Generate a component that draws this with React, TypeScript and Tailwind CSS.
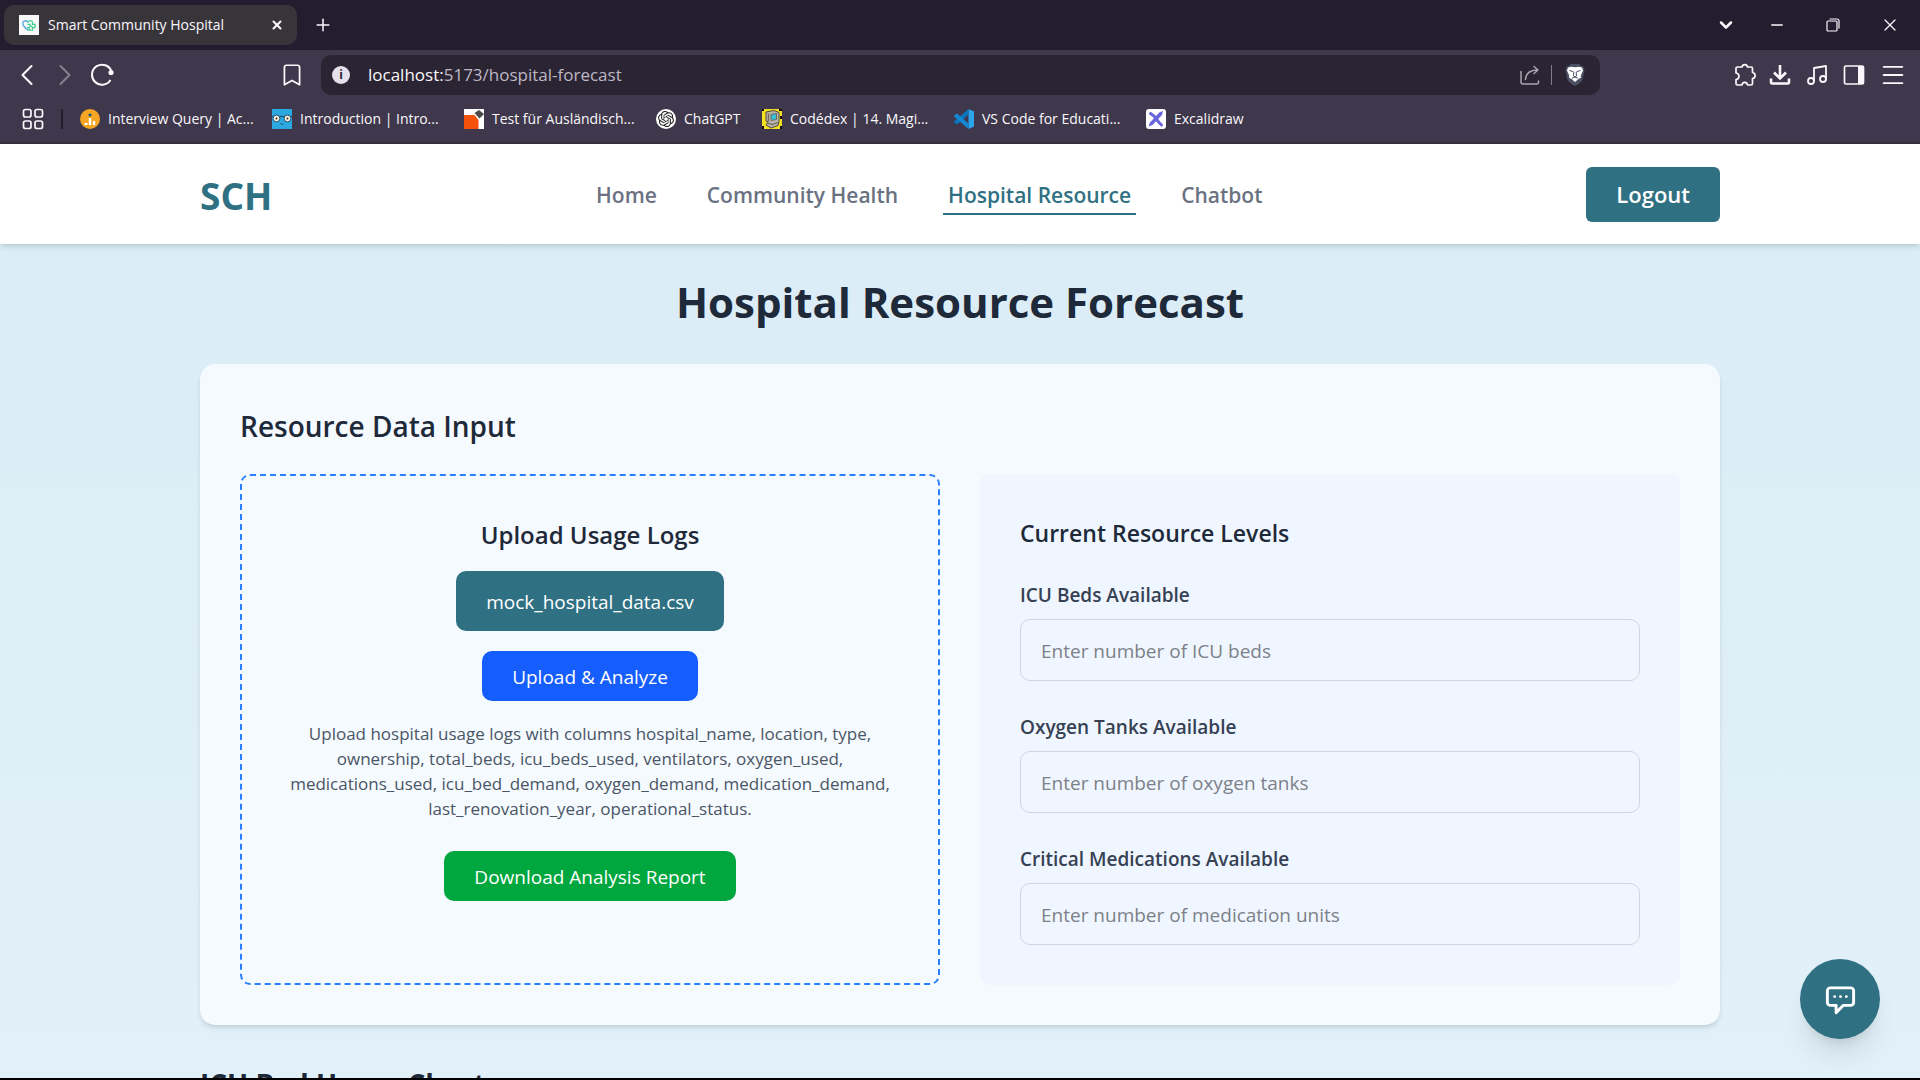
import React from 'react';
import {
  Bookmark,
  ChevronDown,
  ChevronLeft,
  ChevronRight,
  Menu,
  Minus,
  Music,
  Plus,
  X,
} from 'lucide-react';
import { SiOpenai } from 'react-icons/si';

const SchFavicon = () => (
  <svg viewBox="0 0 20 20" className="size-5 shrink-0">
    <rect width="20" height="20" fill="#f8f8f8" />
    <path d="M9.5 15.5C6 13 3.8 10.800 3.800 8.300 3.800 5.500 7.500 4.800 9 7.300" fill="none" stroke="#4aa3d8" strokeWidth="1.300" />
    <path d="M9 7.300C10 5 13.500 5 13.500 7.500v1.800h2.500v3.400h-2.500v2.500h-3.300v-2.500H8M8.500 9.300h2.500v2h2.500" fill="none" stroke="#3fcf8e" strokeWidth="1.300" />
  </svg>
);

const InterviewIcon = () => (
  <svg viewBox="0 0 20 20" className="size-5 shrink-0">
    <circle cx="10" cy="10" r="10" fill="#f6a623" />
    <circle cx="10" cy="6" r="1.600" fill="#22577a" />
    <path d="M10 9v7M14 12v4" stroke="#fff" strokeWidth="2.400" />
    <path d="M4.500 15h3" stroke="#fff" strokeWidth="2" />
  </svg>
);

const IntroIcon = () => (
  <svg viewBox="0 0 20 20" className="size-5 shrink-0">
    <rect width="20" height="20" fill="#2ba8e0" />
    <path d="M0 7.500h20" stroke="#1b4f72" strokeWidth="1.200" />
    <circle cx="4.500" cy="9.500" r="3.400" fill="#fdf3dc" stroke="#1b4f72" />
    <circle cx="15.500" cy="9.500" r="3.400" fill="#fdf3dc" stroke="#1b4f72" />
    <circle cx="4.500" cy="9.500" r="1" fill="#222" />
    <circle cx="15.500" cy="9.500" r="1" fill="#222" />
    <path d="M8.500 14.500l1.500 1 1.500-1" fill="none" stroke="#1b4f72" />
  </svg>
);

const TestIcon = () => (
  <svg viewBox="0 0 20 20" className="size-5 shrink-0">
    <rect width="20" height="20" fill="#fff" />
    <path d="M0 6h10.500l4 5V20H0z" fill="#f4510b" />
    <path d="M10.500 4l4.500-3 5 4-4.500 4.500z" fill="#4a4a4a" />
  </svg>
);

const ChatGptIcon = () => (
  <span className="flex size-5 shrink-0 items-center justify-center rounded-full bg-white">
    <SiOpenai className="size-4 text-[#222222]" />
  </span>
);

const CodedexIcon = () => (
  <svg viewBox="0 0 20 20" className="size-5 shrink-0">
    <rect width="20" height="20" fill="#f3e01e" />
    <path d="M0 0h2v2H0zM17 0h3v2h-3zM0 17h2v3H0zM18 17h2v3h-2zM18 7h2v3h-2z" fill="#171300" />
    <path d="M4 3l8-1.500 5 2v9l-1 4-7 2.500-5-3 2-3-2-1z" fill="#b9b3a8" stroke="#4d4940" strokeWidth="1" />
    <path d="M9 5.500l5.500-1v6L9 11.500z" fill="#35c3da" stroke="#6e695e" strokeWidth="1" />
    <path d="M6 14l4 1.500 6-2M6.500 4.500v8" fill="none" stroke="#6e695e" strokeWidth="1.200" />
  </svg>
);

const VsCodeIcon = () => (
  <svg viewBox="0 0 20 20" className="size-5 shrink-0">
    <path d="M14.500 0L20 2.500v15L14.500 20z" fill="#2aa5ee" />
    <path d="M14.500 0v5.500L3 15.500 0 13.500v-1z" fill="#0a74bd" />
    <path d="M14.500 20v-5.500L3 4.500 0 6.500v1z" fill="#1588d3" />
  </svg>
);

const ExcalidrawIcon = () => (
  <svg viewBox="0 0 20 20" className="size-5 shrink-0">
    <rect width="20" height="20" rx="3" fill="#fff" />
    <path d="M4.500 4.500l3.500 2.500 5 6.500 2.500 2.500" fill="none" stroke="#6965db" strokeWidth="3" strokeLinecap="round" />
    <path d="M17 2l-3.500 1.300L4 13.500l-1.500 4L6.500 16 16 6z" fill="#6965db" />
  </svg>
);

const ReloadIcon = () => (
  <svg viewBox="0 0 24 24" className="size-6" fill="none" stroke="currentColor" strokeWidth="2">
    <path d="M19.500 17A10 10 0 1 1 20.500 8.500" />
    <circle cx="20" cy="9.500" r="2.600" fill="currentColor" stroke="none" />
  </svg>
);

const AppsIcon = () => (
  <svg viewBox="0 0 22 22" className="size-[22px]" fill="none" stroke="currentColor" strokeWidth="1.700">
    <rect x="1.500" y="1.500" width="7.500" height="7.500" rx="2" />
    <rect x="13" y="1.500" width="7.500" height="7.500" rx="2" />
    <rect x="1.500" y="13" width="7.500" height="7.500" rx="2" />
    <rect x="13" y="13" width="7.500" height="7.500" rx="2" />
  </svg>
);

const ShareIcon = () => (
  <svg viewBox="0 0 20 20" className="size-5" fill="none" stroke="currentColor" strokeWidth="1.500" strokeLinecap="round" strokeLinejoin="round">
    <path d="M1 6.500V17a2 2 0 0 0 2 2h13.500a2 2 0 0 0 2-2v-1" />
    <path d="M5.500 14.500C6 8.500 9.500 5 17.500 5M14 1.500L18 5l-4 3.500" />
  </svg>
);

const BraveIcon = () => (
  <svg viewBox="0 0 20 24" className="h-6 w-5">
    <path d="M5.500 1h9L16 3l2.500.500 1 4-1.800 8.500c-.500 2-2.200 4-7.700 7-5.500-3-7.200-5-7.700-7L.500 7.500l1-4L4 3z" fill="#4b5063" />
    <path d="M3 4.500l3-.700 4 .500 4-.500 3 .700 1 3-2.300 5.300.300 2-2.500 1.200L10 19l-3.500-3-2.500-1.200.300-2L2 7.500z" fill="#fff" />
    <path d="M4.500 7.500l4 1.200M15.500 7.500l-4 1.200M8.800 9L8.500 13l1.500 1 1.500-1-.300-4M7 15.300l3-1.300 3 1.300" fill="none" stroke="#4b5063" strokeWidth="1" />
  </svg>
);

const PuzzleIcon = () => (
  <svg viewBox="0 0 24 24" className="size-6" fill="none" stroke="currentColor" strokeWidth="1.700" strokeLinejoin="round">
    <path d="M3 5.500A1.500 1.500 0 0 1 4.500 4H9c.500-3.200 5-3.200 5.500 0h3.500A1.500 1.500 0 0 1 19.500 5.500V9.500c3.500.500 3.500 5.500 0 6v5a1.500 1.500 0 0 1-1.500 1.500H14.500c-.500-3.500-5-3.500-5.500 0H4.500A1.500 1.500 0 0 1 3 20.500V16.500c4-.500 4-6 0-6.500z" />
  </svg>
);

const DownloadIcon = () => (
  <svg viewBox="0 0 22 22" className="size-[22px]" fill="none" stroke="currentColor" strokeWidth="2.600">
    <path d="M11 1v13M5 8.500l6 6 6-6" />
    <path d="M2 14.500V18a1.500 1.500 0 0 0 1.500 1.500h15A1.500 1.500 0 0 0 20 18v-3.500" />
  </svg>
);

const SidebarIcon = () => (
  <svg viewBox="0 0 22 22" className="size-[22px]">
    <rect x="1.500" y="2" width="19" height="18" rx="1.500" fill="none" stroke="currentColor" strokeWidth="1.700" />
    <path d="M15 2h6v18h-6z" fill="currentColor" />
  </svg>
);

const RestoreIcon = () => (
  <svg viewBox="0 0 14 14" className="size-[14px]" fill="none" stroke="currentColor" strokeWidth="1.200">
    <rect x="1" y="3" width="10" height="10" rx="1" />
    <path d="M3.500 1H11a2 2 0 0 1 2 2v7.500" />
  </svg>
);

const ChatIcon = () => (
  <svg viewBox="0 0 24 24" className="size-[35px]" fill="none" stroke="currentColor" strokeWidth="2" strokeLinecap="round" strokeLinejoin="round">
    <path d="M8 10h.01M12 10h.01M16 10h.01M9 16H5a2 2 0 01-2-2V6a2 2 0 012-2h14a2 2 0 012 2v8a2 2 0 01-2 2h-5l-5 5v-5z" />
  </svg>
);

const bookmarks = [
  { title: 'Interview Query | Ac...', icon: <InterviewIcon />, long: true },
  { title: 'Introduction | Intro...', icon: <IntroIcon />, long: true },
  { title: 'Test für Ausländisch...', icon: <TestIcon />, long: true },
  { title: 'ChatGPT', icon: <ChatGptIcon />, long: false },
  { title: 'Codédex | 14. Magi...', icon: <CodedexIcon />, long: true },
  { title: 'VS Code for Educati...', icon: <VsCodeIcon />, long: true },
  { title: 'Excalidraw', icon: <ExcalidrawIcon />, long: false },
];

const navLinks = ['Home', 'Community Health', 'Hospital Resource', 'Chatbot'];

const fields = [
  { id: 'icu', label: 'ICU Beds Available', placeholder: 'Enter number of ICU beds' },
  { id: 'oxygen', label: 'Oxygen Tanks Available', placeholder: 'Enter number of oxygen tanks' },
  { id: 'medication', label: 'Critical Medications Available', placeholder: 'Enter number of medication units' },
];

const BrowserChrome: React.FC = () => (
  <div className="shrink-0 border-b-2 border-[#322d3a] bg-[#3f374b] text-[#faf8fc]">
    {/* Title bar */}
    <div className="flex h-[50px] items-center bg-[#241d2f] pl-1">
      <div className="flex h-10 w-[293px] items-center rounded-[10px] bg-[#38353a] pr-[13px] pl-[15px]">
        <SchFavicon />
        <span className="ml-[9px] flex-1 whitespace-nowrap text-sm">Smart Community Hospital</span>
        <button aria-label="Close tab"><X className="size-[14px]" strokeWidth={3.5} /></button>
      </div>
      <button aria-label="New tab" className="ml-4"><Plus className="size-5" strokeWidth={1.8} /></button>
      <div className="ml-auto flex items-center gap-9 pr-5">
        <button aria-label="Search tabs"><ChevronDown className="size-5" strokeWidth={3} /></button>
        <button aria-label="Minimize" className="-ml-1"><Minus className="size-[18px]" strokeWidth={1.8} /></button>
        <button aria-label="Restore" className="ml-1"><RestoreIcon /></button>
        <button aria-label="Close" className="ml-1"><X className="size-5" strokeWidth={1.5} /></button>
      </div>
    </div>

    {/* Address bar */}
    <div className="flex h-[50px] items-center pr-[13px] pl-[9px]">
      <button aria-label="Back"><ChevronLeft className="size-9" strokeWidth={1.4} /></button>
      <button aria-label="Forward" className="ml-0.5 text-[#85808f]"><ChevronRight className="size-9" strokeWidth={1.4} /></button>
      <button aria-label="Reload" className="ml-2"><ReloadIcon /></button>
      <button aria-label="Bookmark this page" className="ml-[164px]"><Bookmark className="size-[26px]" strokeWidth={1.6} /></button>
      <div className="mr-[133px] ml-4 flex h-10 flex-1 items-center rounded-[10px] bg-[#2b2433] pr-[15px] pl-[11px]">
        <span className="flex size-[18px] items-center justify-center rounded-full bg-[#e6e0ec] text-xs font-bold text-[#2b2433]">i</span>
        <p className="ml-[18px] flex-1 text-[17px] text-[#bdb8c4]">
          <span className="text-[#faf8fc]">localhost:</span>5173/hospital-forecast
        </p>
        <button aria-label="Share" className="text-[#a9a4b0]"><ShareIcon /></button>
        <span className="mr-[13px] ml-[11px] h-5 w-px bg-[#827d8b]" />
        <button aria-label="Shields"><BraveIcon /></button>
      </div>
      <div className="flex items-center gap-[14px]">
        <button aria-label="Extensions"><PuzzleIcon /></button>
        <button aria-label="Downloads" className="-ml-0.5"><DownloadIcon /></button>
        <button aria-label="Media"><Music className="size-6" strokeWidth={1.8} /></button>
        <button aria-label="Sidebar"><SidebarIcon /></button>
        <button aria-label="Menu"><Menu className="size-7" strokeWidth={1.6} /></button>
      </div>
    </div>

    {/* Bookmarks */}
    <div className="flex h-[42px] items-center pb-1 pl-[22px] text-sm">
      <button aria-label="Apps"><AppsIcon /></button>
      <span className="mx-[17px] h-5 w-[2px] bg-[#241d2f]" />
      <div className="flex gap-5">
        {bookmarks.map((b) => (
          <a key={b.title} href="#" className="flex items-center gap-2 whitespace-nowrap">
            {b.icon}
            <span className={b.long ? 'w-36' : 'w-[58px]'}>{b.title}</span>
          </a>
        ))}
      </div>
    </div>
  </div>
);

const Navbar: React.FC = () => (
  <header className="relative shrink-0 bg-white shadow-md">
    <div className="mx-auto flex h-[100px] max-w-[1520px] items-center justify-between">
      <a href="#" className="pt-1 text-[37px] leading-10 font-bold text-[#307083]">SCH</a>
      <nav className="flex gap-10">
        {navLinks.map((link) => (
          <a
            key={link}
            href="#"
            className={
              link === 'Hospital Resource'
                ? 'border-b-2 border-[#307083] px-[5px] pt-[5px] text-[21px] leading-[35px] font-semibold text-[#307083]'
                : 'border-b-2 border-transparent px-[5px] pt-[5px] text-[21px] leading-[35px] font-semibold text-[#6a7282]'
            }
          >
            {link}
          </a>
        ))}
      </nav>
      <button className="rounded-md bg-[#307083] px-[30px] py-[10px] text-[22px] leading-[35px] font-semibold text-white">Logout</button>
    </div>
  </header>
);

const UploadBox: React.FC = () => (
  <div className="flex flex-col items-center rounded-[10px] border-2 border-dashed border-[#2b7fff] px-10 pt-10 text-center">
    <h3 className="text-2xl leading-[38px] font-semibold text-[#1e2939]">Upload Usage Logs</h3>
    <label className="mt-[17px] flex h-[60px] cursor-pointer items-center rounded-[10px] bg-[#307083] px-[30px] pt-0.5 text-[19px] font-medium text-white">
      mock_hospital_data.csv
      <input type="file" className="hidden" />
    </label>
    <button className="mt-5 h-[50px] rounded-[10px] bg-[#155dfc] px-[30px] pt-0.5 text-[19px] font-medium text-white">Upload &amp; Analyze</button>
    <p className="mt-5 text-[17px] leading-[25px] text-[#4a5565]">
      Upload hospital usage logs with columns hospital_name, location, type, ownership, total_beds,
      icu_beds_used, ventilators, oxygen_used, medications_used, icu_bed_demand, oxygen_demand,
      medication_demand, last_renovation_year, operational_status.
    </p>
    <button className="mt-[30px] h-[50px] rounded-[10px] bg-[#00a63e] px-[30px] pt-0.5 text-[19px] font-medium text-white">Download Analysis Report</button>
  </div>
);

const ResourceLevels: React.FC = () => (
  <div className="rounded-[10px] bg-[#eff6ff] p-10">
    <h3 className="text-[23px] leading-[38px] font-semibold text-[#1e2939]">Current Resource Levels</h3>
    <div className="mt-[27px] flex flex-col gap-[30px]">
      {fields.map((f) => (
        <div key={f.id}>
          <label htmlFor={f.id} className="block text-[19px] leading-8 font-semibold text-[#364153]">{f.label}</label>
          <input
            id={f.id}
            type="number"
            placeholder={f.placeholder}
            className="mt-2 block h-[62px] w-full rounded-[10px] border border-[#d1d5dc] px-5 pt-0.5 text-[19px] placeholder:text-[#7d8189]"
          />
        </div>
      ))}
    </div>
  </div>
);

const App: React.FC = () => {
  return (
    <div className="flex h-screen flex-col overflow-hidden border-b-2 border-black font-['Open_Sans','Noto_Sans',sans-serif]">
      <BrowserChrome />
      <div className="relative flex min-h-0 flex-1 flex-col overflow-hidden bg-linear-to-b from-[#daecf6] to-[#e2f1f9]">
        <Navbar />
        <main className="mx-auto w-full max-w-[1520px] pt-[30px]">
          <h1 className="text-center text-[42px] leading-[56px] font-bold text-[#1e2939]">Hospital Resource Forecast</h1>
          <section className="mt-[34px] rounded-[15px] bg-[#f5faff] p-10 shadow-md">
            <h2 className="text-[28px] leading-[44px] font-semibold text-[#1e2939]">Resource Data Input</h2>
            <div className="mt-[26px] grid grid-cols-2 gap-10">
              <UploadBox />
              <ResourceLevels />
            </div>
          </section>
          <section className="mt-10">
            <h2 className="text-[28px] leading-[38px] font-bold text-[#1e2939]">ICU Bed Usage Chart</h2>
          </section>
        </main>
        <button aria-label="Open chat" className="absolute right-10 bottom-[39px] flex size-20 items-center justify-center rounded-full bg-[#307083] text-white shadow-xl">
          <ChatIcon />
        </button>
      </div>
    </div>
  );
};

export default App;
